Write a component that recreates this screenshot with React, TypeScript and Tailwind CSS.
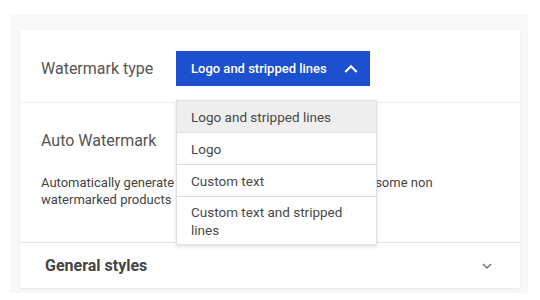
import React, { useState } from 'react';

const options = ['Logo and stripped lines', 'Logo', 'Custom text', 'Custom text and stripped lines'];

const ChevronUp = ({ className }: { className?: string }) => (
  <svg viewBox="0 0 24 24" className={className} fill="currentColor">
    <path d="M7.41 15.41L12 10.83l4.59 4.58L18 14l-6-6-6 6z" />
  </svg>
);

const ChevronDown = ({ className }: { className?: string }) => (
  <svg viewBox="0 0 24 24" className={className} fill="currentColor">
    <path d="M16.59 8.59L12 13.17 7.41 8.59 6 10l6 6 6-6z" />
  </svg>
);

const App: React.FC = () => {
  const [selected, setSelected] = useState(0);
  const [open, setOpen] = useState(true);

  return (
    <div className="w-[540px] h-[300px] bg-white font-['Roboto',sans-serif]">
      <div className="ml-[10px] mt-[15px] w-[518px] bg-[#f8f8f8] pl-[10px] pr-[8px] pt-[15px] pb-[5px]">
        <div className="bg-white shadow-[0_1px_3px_rgba(0,0,0,0.08)]">
          {/* Watermark type */}
          <div className="flex items-center pl-[21px] pt-[21px] pb-[16px] border-b border-[#f0f0f0]">
            <span className="text-[16px] text-[#555] w-[135px]">Watermark type</span>
            <div className="relative">
              <button
                onClick={() => setOpen(!open)}
                className="h-[35px] w-[194px] bg-[#1d4fd1] text-white text-[13px] font-medium whitespace-nowrap flex items-center justify-between pl-[15px] pr-[6px]"
              >
                <span>{options[selected]}</span>
                <ChevronUp className="w-[26px] h-[26px]" />
              </button>
              {open && (
                <div className="absolute left-0 top-[49px] w-[201px] bg-white border border-[#e0e0e0] shadow-[0_2px_4px_rgba(0,0,0,0.12)] z-10">
                  {options.map((o, i) => (
                    <div
                      key={o}
                      onClick={() => {
                        setSelected(i);
                        setOpen(false);
                      }}
                      className={`px-[14px] text-[13.5px] leading-[18px] text-[#484848] cursor-pointer ${
                        i === selected ? 'bg-[#eeeeee]' : ''
                      } ${i > 0 ? 'border-t border-[#e0e0e0]' : ''} ${
                        i === 3 ? 'py-[5.5px]' : 'py-[6.5px]'
                      }`}
                    >
                      {o}
                    </div>
                  ))}
                </div>
              )}
            </div>
          </div>

          {/* Auto watermark */}
          <div className="pl-[21px] pr-[20px] pt-[26px] pb-[34px] border-b border-[#e4e4e4]">
            <h3 className="text-[16px] leading-[24px] text-[#555]">Auto Watermark</h3>
            <p className="mt-[21px] text-[13px] leading-[17px] text-[#444]">
              Automatically generate watermarks for new products and some non
              <br />
              watermarked products
            </p>
          </div>

          {/* General styles */}
          <div className="flex items-center justify-between h-[45px] pl-[25px] pr-[24px]">
            <span className="text-[16px] font-bold text-[#444]">General styles</span>
            <ChevronDown className="w-[18px] h-[18px] text-[#777]" />
          </div>
        </div>
      </div>
    </div>
  );
};

export default App;
